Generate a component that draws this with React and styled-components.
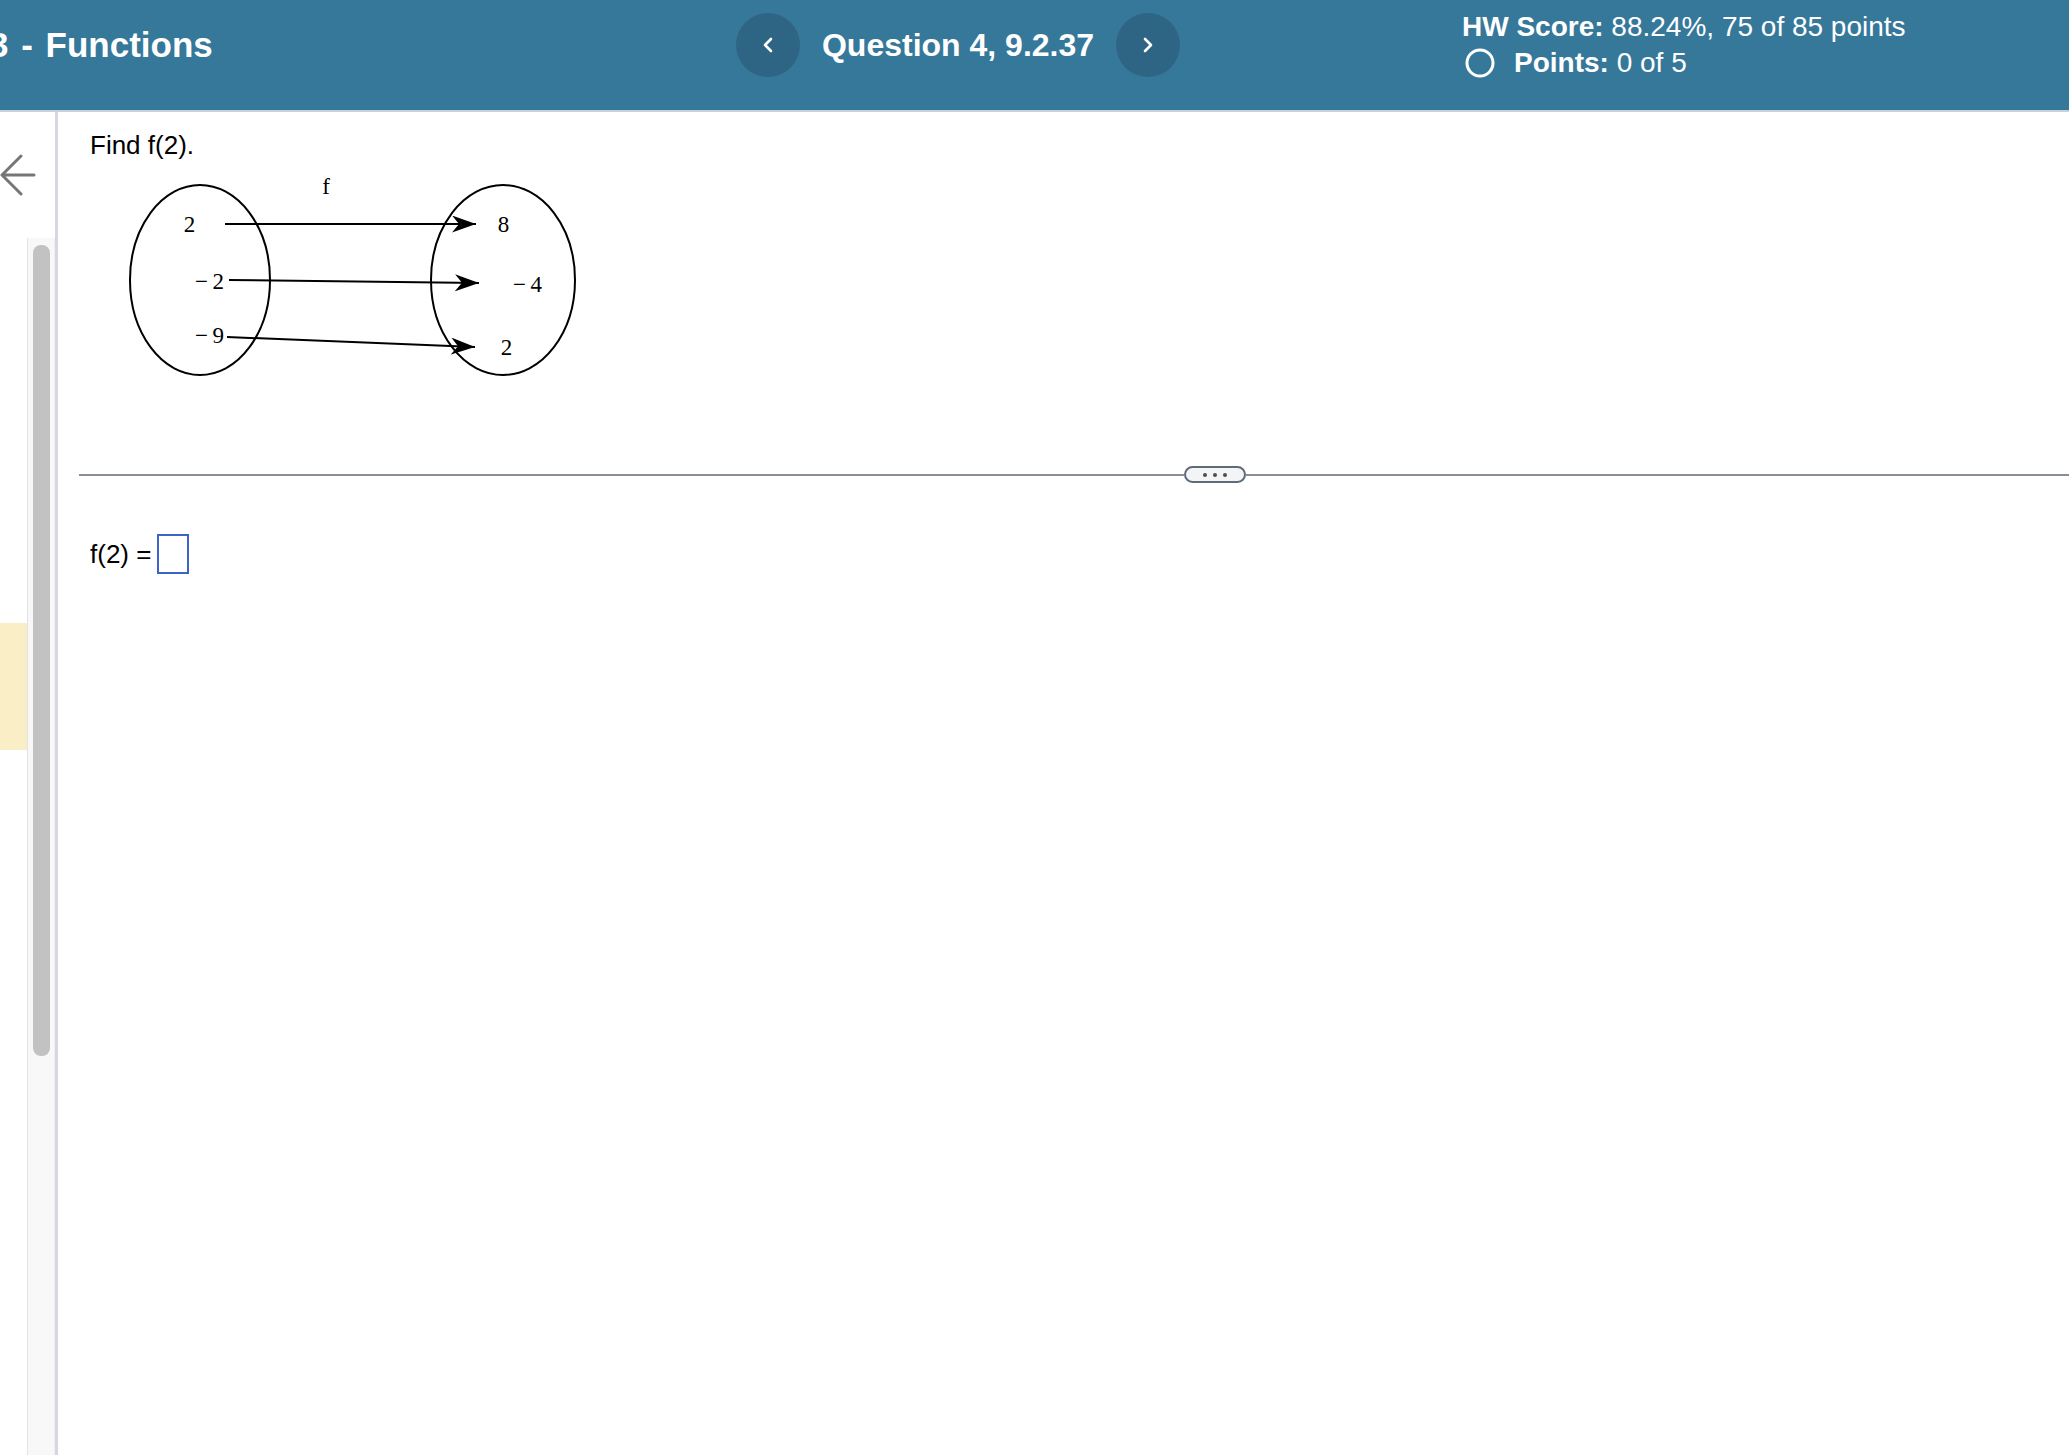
import React from "react";
import styled, { createGlobalStyle } from "styled-components";

const GlobalStyle = createGlobalStyle`
  html, body { margin: 0; padding: 0; background: #fff; }
  body { font-family: "Liberation Sans", Arial, Helvetica, sans-serif; color: #000; }
  * { box-sizing: border-box; }
`;

const Page = styled.div`
  width: 100vw;
  height: 100vh;
  overflow: hidden;
  display: flex;
  flex-direction: column;
`;

const Header = styled.header`
  flex: 0 0 112px;
  background: #36789a;
  border-bottom: 2px solid #c8d2da;
  display: flex;
  align-items: flex-start;
  color: #fff;
  overflow: hidden;
`;

const TitleArea = styled.div`
  flex: 0 0 736px;
  height: 64px;
  margin-top: 13px;
  display: flex;
  align-items: center;
  overflow: hidden;
`;

const Title = styled.h1`
  margin: 0 0 0 -11px;
  font-size: 35px;
  font-weight: 700;
  word-spacing: 3px;
  white-space: nowrap;
`;

const Nav = styled.nav`
  flex: 0 0 444px;
  margin-top: 13px;
  display: flex;
  align-items: center;
  justify-content: space-between;
`;

const NavButton = styled.button`
  width: 64px;
  height: 64px;
  border-radius: 50%;
  border: none;
  padding: 0;
  background: #2e6584;
  display: flex;
  align-items: center;
  justify-content: center;
  cursor: pointer;
`;

const QuestionLabel = styled.div`
  font-size: 32px;
  font-weight: 700;
  white-space: nowrap;
`;

const Score = styled.div`
  margin-left: 282px;
  margin-top: 9px;
  font-size: 28px;
  line-height: 36px;
  white-space: nowrap;
`;

const ScoreLine = styled.div`
  display: flex;
  align-items: center;
  gap: ${(p) => (p.$icon ? "19px" : "0")};
  margin-left: ${(p) => (p.$icon ? "3px" : "0")};
`;

const Strong = styled.b`
  font-weight: 700;
`;

const Body = styled.div`
  flex: 1 1 auto;
  display: flex;
  min-height: 0;
`;

const Sidebar = styled.aside`
  flex: 0 0 58px;
  border-right: 3px solid #d5d8e3;
  display: flex;
  flex-direction: column;
`;

const BackRow = styled.div`
  flex: 0 0 126px;
  display: flex;
  align-items: center;
`;

const BackButton = styled.button`
  border: none;
  background: none;
  padding: 0;
  display: flex;
  cursor: pointer;
`;

const RailRow = styled.div`
  flex: 1 1 auto;
  display: flex;
  min-height: 0;
`;

const QuestionStrip = styled.div`
  flex: 0 0 27px;
  padding-top: 385px;
`;

const StripMark = styled.div`
  height: 127px;
  background: #faeec7;
`;

const Track = styled.div`
  flex: 1 1 auto;
  background: #f8f8f8;
  border-left: 1px solid #e3e3e3;
  border-right: 1px solid #efefef;
  padding: 7px 4px 0 5px;
`;

const Thumb = styled.div`
  height: 811px;
  background: #c2c2c2;
  border-radius: 8px;
`;

const Main = styled.main`
  flex: 1 1 auto;
  min-width: 0;
  display: flex;
  flex-direction: column;
`;

const QuestionArea = styled.section`
  padding: 18px 0 0 32px;
`;

const Prompt = styled.p`
  margin: 0;
  font-size: 26px;
  line-height: 30px;
`;

const Diagram = styled.svg`
  display: block;
  margin: 10px 0 0 20px;
  font-family: "Liberation Serif", "Times New Roman", serif;
`;

const DividerRow = styled.div`
  display: flex;
  align-items: center;
  margin: 76px 0 0 21px;
`;

const Rule = styled.div`
  height: 2px;
  background: #868e9a;
  flex: ${(p) => (p.$grow ? "1 1 auto" : "0 0 1105px")};
`;

const Handle = styled.button`
  flex: 0 0 62px;
  height: 17px;
  border: 2px solid #5f6b79;
  border-radius: 9px;
  background: #f3f4f6;
  padding: 0;
  display: flex;
  align-items: center;
  justify-content: center;
  gap: 6px;
`;

const Dot = styled.span`
  width: 4px;
  height: 4px;
  border-radius: 50%;
  background: #4a4f57;
`;

const AnswerRow = styled.div`
  display: flex;
  align-items: center;
  gap: 6px;
  margin: 51px 0 0 32px;
  font-size: 26px;
`;

const AnswerBox = styled.input`
  width: 32px;
  height: 40px;
  border: 2px solid #3c63c7;
  padding: 0;
  margin: 0;
  outline: none;
  background: #fff;
`;

const Chevron = ({ dir }) => (
  <svg width="12" height="18" viewBox="0 0 12 18">
    <polyline
      points={dir === "left" ? "9,3 3,9 9,15" : "3,3 9,9 3,15"}
      fill="none"
      stroke="#fff"
      strokeWidth="2.6"
      strokeLinecap="round"
      strokeLinejoin="round"
    />
  </svg>
);

const Ring = () => (
  <svg width="30" height="30" viewBox="0 0 30 30">
    <circle cx="15" cy="15" r="13" fill="none" stroke="#fff" strokeWidth="3" />
  </svg>
);

const BackArrow = () => (
  <svg width="36" height="42" viewBox="0 0 36 42">
    <path
      d="M34 21 H2 M21 2 L2 21 L21 40"
      fill="none"
      stroke="#767676"
      strokeWidth="3"
      strokeLinecap="round"
      strokeLinejoin="round"
    />
  </svg>
);

const arrows = [
  [115, 54, 366, 54],
  [119, 110, 369, 113],
  [117, 167, 365, 177],
];

const labels = [
  { x: 79.5, y: 62, a: "middle", t: "2" },
  { x: 114, y: 119, a: "end", t: "\u2212\u20092" },
  { x: 114, y: 173, a: "end", t: "\u2212\u20099" },
  { x: 393.5, y: 62, a: "middle", t: "8" },
  { x: 403, y: 122, a: "start", t: "\u2212\u20094" },
  { x: 396.5, y: 185, a: "middle", t: "2" },
];

const MappingDiagram = () => (
  <Diagram width="490" height="220" viewBox="0 0 490 220">
    <defs>
      <marker
        id="head"
        markerUnits="userSpaceOnUse"
        markerWidth="26"
        markerHeight="18"
        refX="24"
        refY="8.5"
        orient="auto"
      >
        <path d="M0,0 L24,8.5 L0,17 L7,8.5 z" fill="#000" />
      </marker>
    </defs>
    <ellipse cx="90" cy="110" rx="70" ry="95" fill="none" stroke="#000" strokeWidth="2" />
    <ellipse cx="393" cy="110" rx="72" ry="95" fill="none" stroke="#000" strokeWidth="2" />
    <text x="216" y="24" fontSize="23" textAnchor="middle">f</text>
    {labels.map((l, i) => (
      <text key={i} x={l.x} y={l.y} fontSize="23" textAnchor={l.a}>
        {l.t}
      </text>
    ))}
    {arrows.map(([x1, y1, x2, y2], i) => (
      <line
        key={i}
        x1={x1}
        y1={y1}
        x2={x2}
        y2={y2}
        stroke="#000"
        strokeWidth="2"
        markerEnd="url(#head)"
      />
    ))}
  </Diagram>
);

export default function App() {
  return (
    <Page>
      <GlobalStyle />
      <Header>
        <TitleArea>
          <Title>3 - Functions</Title>
        </TitleArea>
        <Nav>
          <NavButton aria-label="Previous question">
            <Chevron dir="left" />
          </NavButton>
          <QuestionLabel>Question 4, 9.2.37</QuestionLabel>
          <NavButton aria-label="Next question">
            <Chevron dir="right" />
          </NavButton>
        </Nav>
        <Score>
          <ScoreLine>
            <Strong>HW Score:</Strong>&nbsp;88.24%, 75 of 85 points
          </ScoreLine>
          <ScoreLine $icon>
            <Ring />
            <span>
              <Strong>Points:</Strong> 0 of 5
            </span>
          </ScoreLine>
        </Score>
      </Header>
      <Body>
        <Sidebar>
          <BackRow>
            <BackButton aria-label="Back">
              <BackArrow />
            </BackButton>
          </BackRow>
          <RailRow>
            <QuestionStrip>
              <StripMark />
            </QuestionStrip>
            <Track>
              <Thumb />
            </Track>
          </RailRow>
        </Sidebar>
        <Main>
          <QuestionArea>
            <Prompt>Find f(2).</Prompt>
            <MappingDiagram />
          </QuestionArea>
          <DividerRow>
            <Rule />
            <Handle aria-label="Resize">
              <Dot />
              <Dot />
              <Dot />
            </Handle>
            <Rule $grow />
          </DividerRow>
          <AnswerRow>
            <span>f(2) =</span>
            <AnswerBox aria-label="f(2)" />
          </AnswerRow>
        </Main>
      </Body>
    </Page>
  );
}
